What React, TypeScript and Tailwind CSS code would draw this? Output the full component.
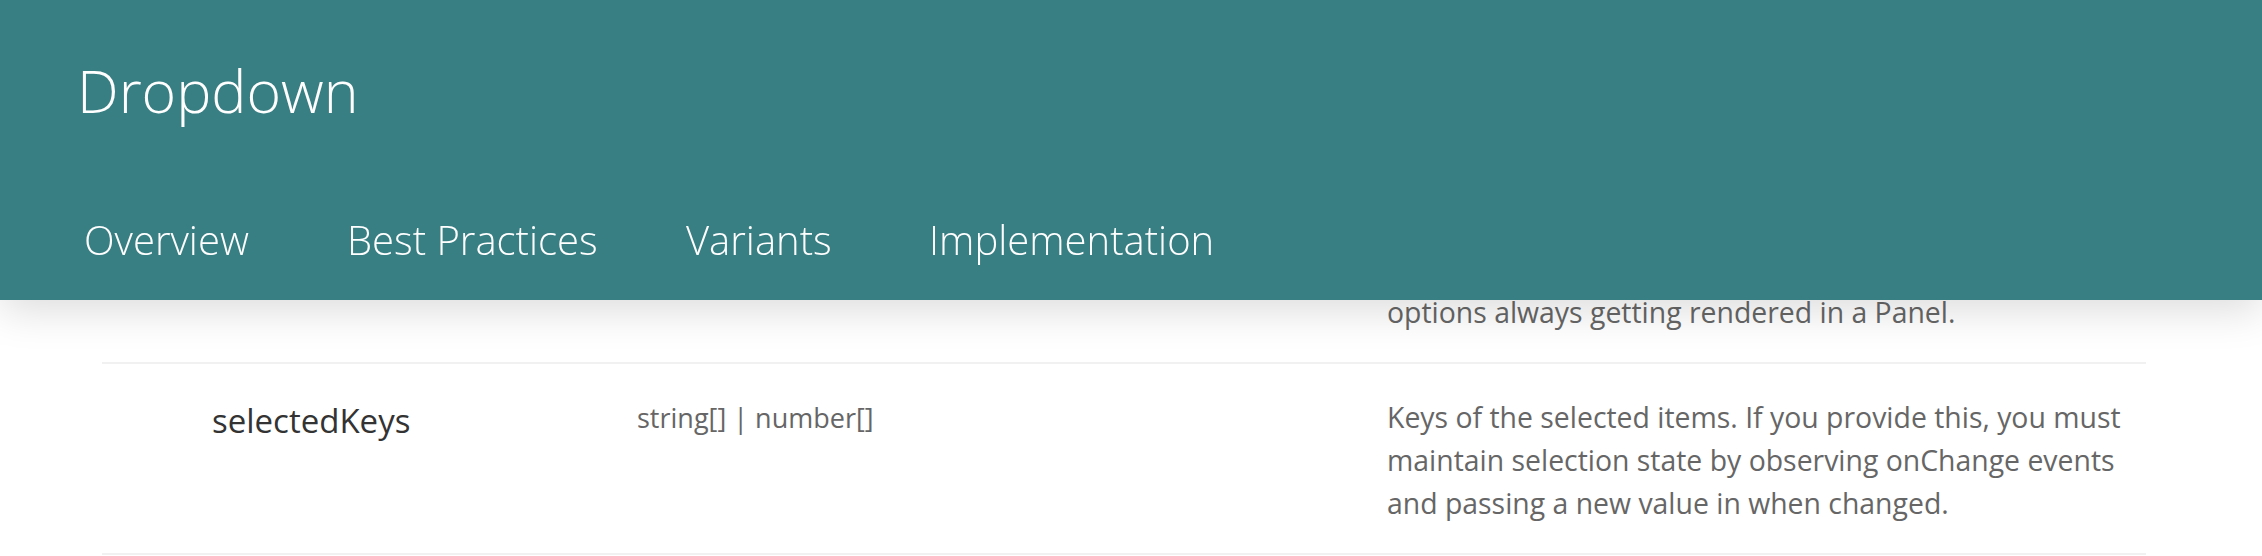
import React from 'react';

const tabs = [
  { label: 'Overview', width: 'w-[263px]' },
  { label: 'Best Practices', width: 'w-[339px]' },
  { label: 'Variants', width: 'w-[243px]' },
  { label: 'Implementation', width: 'w-[300px]' },
];

const Header: React.FC = () => (
  <header className="fixed top-0 left-0 right-0 z-10 h-[300px] bg-[#387f84] text-white shadow-[0_10px_40px_rgba(0,0,0,0.14)]">
    <h1 className="pl-[77px] pt-[61px] text-[59px] leading-none font-light">Dropdown</h1>
    <nav className="flex pl-[84px] pt-[100px]">
      {tabs.map((t) => (
        <button key={t.label} className={`${t.width} text-left text-[40px] leading-none font-light`}>
          {t.label}
        </button>
      ))}
    </nav>
  </header>
);

interface PropRowProps {
  name?: string;
  type?: string;
  children: React.ReactNode;
}

const PropRow: React.FC<PropRowProps> = ({ name, type, children }) => (
  <div className="grid grid-cols-[535px_750px_1fr] border-b-2 border-[#f1f1f1] pt-8 pb-[28px]">
    <div className="pl-[110px] pt-[3px] text-[33px] leading-[43px] text-[#333]">{name}</div>
    <div className="text-[27px] leading-[43px] text-[#666]">{type}</div>
    <div className="text-[28.4px] leading-[43px] text-[#666]">{children}</div>
  </div>
);

export default function App() {
  return (
    <div className="min-h-[556px] bg-white" style={{ fontFamily: '"Open Sans", "Noto Sans", sans-serif' }}>
      <Header />
      <main className="pl-[102px] pr-[116px] pt-[291px]">
        <div className="grid grid-cols-[535px_750px_1fr] border-b-2 border-[#f1f1f1] pb-[28px]">
          <div />
          <div />
          <div className="text-[28.4px] leading-[43px] text-[#666]">options always getting rendered in a Panel.</div>
        </div>
        <PropRow name="selectedKeys" type="string[] | number[]">
          Keys of the selected items. If you provide this, you must maintain selection state by observing onChange events and passing a new value in when changed.
        </PropRow>
      </main>
    </div>
  );
}
